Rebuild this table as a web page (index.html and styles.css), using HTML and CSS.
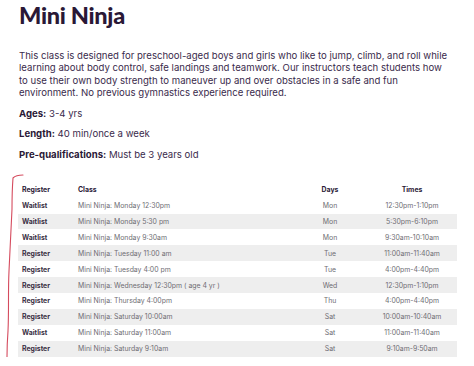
FILE: index.html
```html
<!DOCTYPE html>
<html>
<head>
<meta charset="utf-8">
<link rel="stylesheet" href="styles.css">
</head>
<body>
<main class="page">
  <h1 class="title">Mini Ninja</h1>
  <p class="desc">This class is designed for preschool-aged boys and girls who like to jump, climb, and roll while<br>learning about body control, safe landings and teamwork. Our instructors teach students how<br>to use their own body strength to maneuver up and over obstacles in a safe and fun<br>environment. No previous gymnastics experience required.</p>
  <p class="info"><b>Ages:</b> 3-4 yrs</p>
  <p class="info"><b>Length:</b> 40 min/once a week</p>
  <p class="info"><b>Pre-qualifications:</b> Must be 3 years old</p>
  <div class="schedule">
    <svg class="bracket" width="40" height="200" viewBox="0 0 40 200" aria-hidden="true">
      <path d="M23 6 C19 6 15 7 13 9 C12 22 12 32 12 40 C11 62 10 82 9 102 C8 122 9 142 8 162 C7 175 7 183 7 190 C14 193 20 193 30 192" fill="none" stroke="#d54b5e" stroke-width="1.1" stroke-linecap="round"/>
    </svg>
    <table class="classes">
      <colgroup>
        <col class="c-reg"><col class="c-class"><col class="c-days"><col class="c-times">
      </colgroup>
      <thead>
        <tr><th>Register</th><th>Class</th><th class="ctr">Days</th><th class="ctr">Times</th></tr>
      </thead>
      <tbody>
        <tr><td class="reg">Waitlist</td><td>Mini Ninja: Monday 12:30pm</td><td class="ctr">Mon</td><td class="ctr">12:30pm-1:10pm</td></tr>
        <tr><td class="reg">Waitlist</td><td>Mini Ninja: Monday 5:30 pm</td><td class="ctr">Mon</td><td class="ctr">5:30pm-6:10pm</td></tr>
        <tr><td class="reg">Waitlist</td><td>Mini Ninja: Monday 9:30am</td><td class="ctr">Mon</td><td class="ctr">9:30am-10:10am</td></tr>
        <tr><td class="reg">Register</td><td>Mini Ninja: Tuesday 11:00 am</td><td class="ctr">Tue</td><td class="ctr">11:00am-11:40am</td></tr>
        <tr><td class="reg">Register</td><td>Mini Ninja: Tuesday 4:00 pm</td><td class="ctr">Tue</td><td class="ctr">4:00pm-4:40pm</td></tr>
        <tr><td class="reg">Register</td><td>Mini Ninja: Wednesday 12:30pm ( age 4 yr )</td><td class="ctr">Wed</td><td class="ctr">12:30pm-1:10pm</td></tr>
        <tr><td class="reg">Register</td><td>Mini Ninja: Thursday 4:00pm</td><td class="ctr">Thu</td><td class="ctr">4:00pm-4:40pm</td></tr>
        <tr><td class="reg">Register</td><td>Mini Ninja: Saturday 10:00am</td><td class="ctr">Sat</td><td class="ctr">10:00am-10:40am</td></tr>
        <tr><td class="reg">Waitlist</td><td>Mini Ninja: Saturday 11:00am</td><td class="ctr">Sat</td><td class="ctr">11:00am-11:40am</td></tr>
        <tr><td class="reg">Register</td><td>Mini Ninja: Saturday 9:10am</td><td class="ctr">Sat</td><td class="ctr">9:10am-9:50am</td></tr>
      </tbody>
    </table>
  </div>
</main>
</body>
</html>
```
FILE: styles.css
```css
html, body {
  margin: 0;
  padding: 0;
  background: #ffffff;
}
body {
  font-family: "Inter", "Liberation Sans", sans-serif;
  color: #3a2b4c;
}
.page {
  padding: 0 17px 0 18px;
}
.title {
  margin: 0;
  padding-top: 1px;
  padding-left: 1px;
  font-family: "Lato", "Inter", sans-serif;
  font-size: 23.5px;
  line-height: 28px;
  font-weight: 900;
  color: #2a1836;
  letter-spacing: -0.3px;
}
.desc {
  margin: 21px 0 0;
  padding-left: 1px;
  font-size: 9.6px;
  line-height: 12.4px;
  white-space: nowrap;
  color: #3a2b4c;
}
.info {
  margin: 8px 0 0;
  padding-left: 1px;
  font-size: 9.6px;
  line-height: 12.5px;
  color: #3a2b4c;
}
.info + .info {
  margin-top: 8.3px;
}
.info b {
  font-weight: 700;
  color: #2a1836;
}
.schedule {
  position: relative;
  margin-top: 20px;
}
.bracket {
  position: absolute;
  left: -18px;
  top: -13px;
}
.classes {
  width: 439px;
  border-collapse: collapse;
  table-layout: fixed;
  font-size: 6.9px;
}
.c-reg { width: 56px; }
.c-class { width: 219px; }
.c-days { width: 74px; }
.c-times { width: 90px; }
.classes th, .classes td {
  height: 15.9px;
  padding: 0 0 0 4px;
  text-align: left;
  vertical-align: middle;
  white-space: nowrap;
}
.classes th {
  font-weight: 700;
  color: #2a1836;
}
.classes td {
  color: #6e6d73;
}
.classes td.reg {
  font-weight: 700;
  color: #3a2f44;
}
.classes .ctr {
  text-align: center;
  padding-left: 0;
}
.classes tbody tr:nth-child(even) td {
  background: #eeeeee;
}
```
